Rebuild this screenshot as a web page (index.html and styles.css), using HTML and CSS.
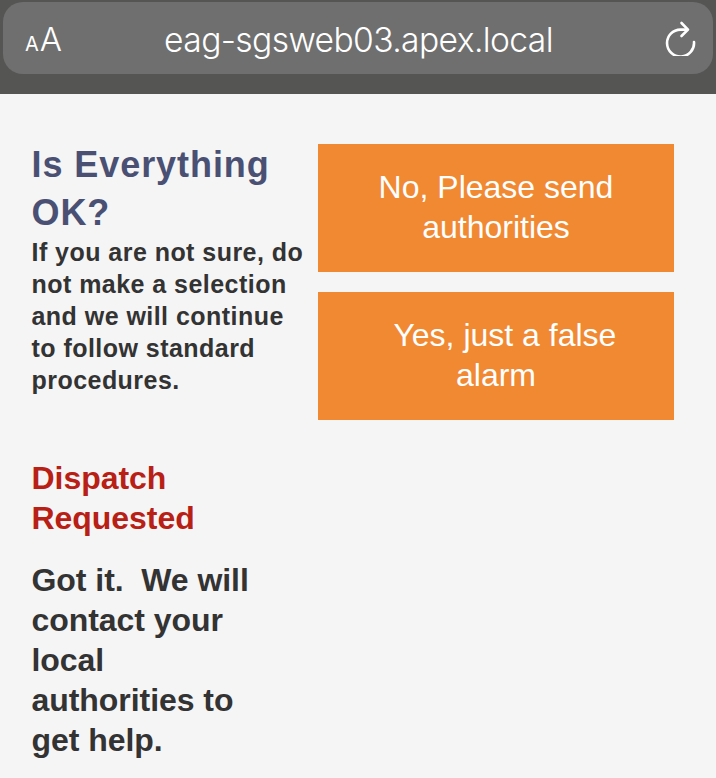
FILE: index.html
```html
<!DOCTYPE html>
<html lang="en">
<head>
<meta charset="utf-8">
<title>Is Everything OK?</title>
<link rel="stylesheet" href="styles.css">
</head>
<body>
<header class="chrome">
  <div class="address">
    <span class="aa"><span class="aa-small">A</span><span class="aa-big">A</span></span>
    <span class="url">eag-sgsweb03.apex.local</span>
    <svg class="reload" viewBox="0 0 32 36" width="32" height="36" fill="none" stroke="#fff" stroke-width="2.6" stroke-linecap="round" stroke-linejoin="round">
      <path d="M29 22A13.5 13.5 0 1 1 15.5 9.6H22"/>
      <path d="M16.5 3 23 9.6 16.5 16"/>
    </svg>
  </div>
</header>
<main class="page">
  <div class="top">
    <section class="intro">
      <h1>Is Everything OK?</h1>
      <p class="note">If you are not sure, do not make a selection and we will continue to follow standard procedures.</p>
    </section>
    <section class="actions">
      <a class="btn">No, Please send authorities</a>
      <a class="btn">&nbsp;&nbsp;Yes, just a false alarm</a>
    </section>
  </div>
  <section class="status">
    <h2>Dispatch Requested</h2>
    <p>Got it.&nbsp; We will contact your local authorities to get help.</p>
  </section>
</main>
</body>
</html>
```

FILE: styles.css
```css
* { box-sizing: border-box; }
html, body { margin: 0; padding: 0; }
body {
  width: 716px;
  height: 778px;
  overflow: hidden;
  background: #f5f5f5;
  font-family: "Liberation Sans", Arial, sans-serif;
  color: #333;
}
.chrome {
  height: 94px;
  padding: 2px 3px 0;
  background: #555553;
}
.address {
  height: 72px;
  border-radius: 20px;
  background: #6f6f6f;
  display: flex;
  align-items: center;
  color: #fff;
  padding: 0 16px 0 22px;
}
.aa { width: 40px; display: flex; align-items: baseline; padding-top: 2px; font-family: Inter, "Liberation Sans", sans-serif; font-weight: 300; }
.aa-small { font-size: 20px; font-weight: 400; margin-right: 1px; }
.aa-big { font-size: 33px; }
.url {
  flex: 1;
  text-align: center;
  font-size: 33.6px;
  font-family: Inter, "Liberation Sans", sans-serif;
  font-weight: 300;
  letter-spacing: -0.6px;
  padding: 2px 13px 0 0;
}
.reload { flex: none; }
.page { padding: 50px 42px 0 31.5px; }
.top { display: flex; }
.intro { width: 286.5px; margin-top: -3px; }
h1 {
  margin: 0;
  padding-right: 10px;
  font-size: 36px;
  line-height: 48px;
  font-weight: 700;
  letter-spacing: 0.93px;
  color: #4a5073;
}
.note {
  margin: -1px 0 0;
  padding-right: 10px;
  font-size: 25px;
  line-height: 32px;
  font-weight: 700;
  letter-spacing: 0.46px;
}
.actions {
  width: 356px;
  display: flex;
  flex-direction: column;
  gap: 20px;
}
.btn {
  display: flex;
  align-items: center;
  justify-content: center;
  height: 128px;
  padding: 0 40px 2px;
  background: #f18933;
  color: #fff;
  font-size: 32px;
  line-height: 40px;
  text-align: center;
}
.status { width: 240px; margin-top: 38px; letter-spacing: -0.05px; }
h2 {
  margin: 0;
  font-size: 32px;
  line-height: 40px;
  font-weight: 700;
  color: #b92015;
}
.status p {
  margin: 22px 0 0;
  font-size: 32px;
  line-height: 40px;
  font-weight: 700;
}
```
